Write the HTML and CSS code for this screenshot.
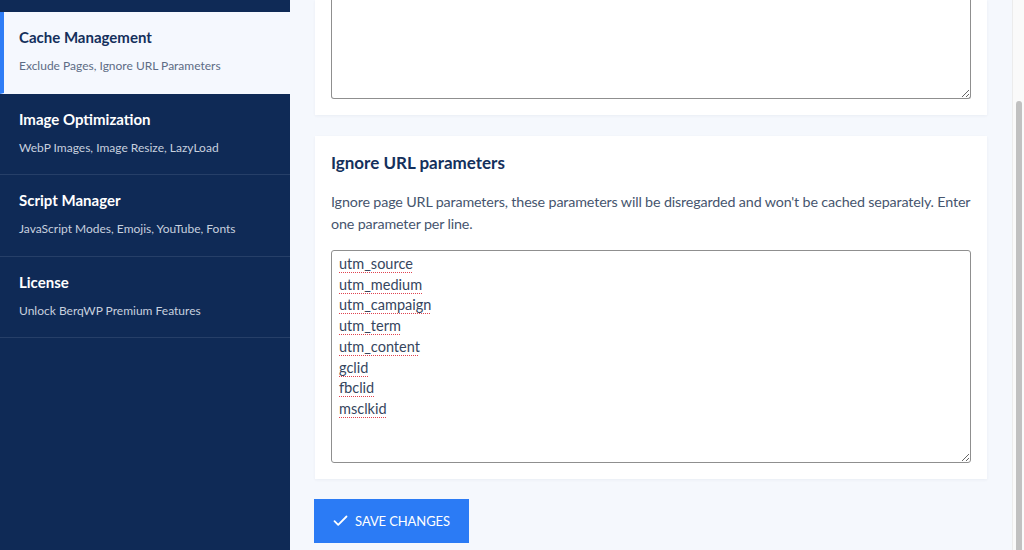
FILE: index.html
```html
<!DOCTYPE html>
<html lang="en">
<head>
  <meta charset="UTF-8">
  <meta name="viewport" content="width=device-width, initial-scale=1.0">
  <title>BerqWP Settings</title>
  <link rel="stylesheet" href="styles.css">
</head>
<body>
  <div class="layout">
    <aside class="sidebar">
      <a class="nav-item active" href="#">
        <span class="nav-title">Cache Management</span>
        <span class="nav-sub">Exclude Pages, Ignore URL Parameters</span>
      </a>
      <a class="nav-item" href="#">
        <span class="nav-title">Image Optimization</span>
        <span class="nav-sub">WebP Images, Image Resize, LazyLoad</span>
      </a>
      <a class="nav-item" href="#">
        <span class="nav-title">Script Manager</span>
        <span class="nav-sub">JavaScript Modes, Emojis, YouTube, Fonts</span>
      </a>
      <a class="nav-item" href="#">
        <span class="nav-title">License</span>
        <span class="nav-sub">Unlock BerqWP Premium Features</span>
      </a>
    </aside>

    <main class="content">
      <!-- bottom of the exclude pages card, scrolled past -->
      <section class="card card-tail">
        <div class="field field-short"></div>
      </section>

      <section class="card">
        <h3>Ignore URL parameters</h3>
        <p>Ignore page URL parameters, these parameters will be disregarded and won't be cached separately. Enter one parameter per line.</p>
        <div class="field field-tall">
          <span class="word">utm_source</span>
          <span class="word">utm_medium</span>
          <span class="word">utm_campaign</span>
          <span class="word">utm_term</span>
          <span class="word">utm_content</span>
          <span class="word">gclid</span>
          <span class="word">fbclid</span>
          <span class="word">msclkid</span>
        </div>
      </section>

      <button class="save-btn" type="button">
        <svg width="15" height="12" viewBox="0 0 15 12" aria-hidden="true">
          <polyline points="1.5,6.2 5.2,9.8 13.5,1.5" fill="none" stroke="#fff" stroke-width="1.8" stroke-linecap="round" stroke-linejoin="round"/>
        </svg>
        Save Changes
      </button>
    </main>

    <div class="scrollbar">
      <div class="scroll-thumb"></div>
    </div>
  </div>
</body>
</html>
```

FILE: styles.css
```css
body {
  margin: 0;
  padding: 0;
  font-family: Lato, "Noto Sans", sans-serif;
  background: #f5f8fd;
  color: #46556e;
  overflow: hidden;
}

.layout {
  display: flex;
  height: 100vh;
}

/* sidebar */
.sidebar {
  width: 290px;
  flex-shrink: 0;
  background: #0f2a56;
  padding-top: 12px;
  box-sizing: border-box;
  display: flex;
  flex-direction: column;
}

.nav-item {
  display: flex;
  flex-direction: column;
  height: 81.5px;
  box-sizing: border-box;
  padding: 15px 0 0 19px;
  border-bottom: 1px solid #263f68;
  text-decoration: none;
}

.nav-title {
  color: #fff;
  font-size: 15px;
  font-weight: bold;
  line-height: 20px;
}

.nav-sub {
  margin-top: 10px;
  color: #c7d0df;
  font-size: 12px;
  line-height: 18px;
}

.nav-item.active {
  background: #f5f8fe;
  border-left: 4px solid #2f7df6;
  padding-left: 15px;
  border-bottom-color: #f5f8fe;
}

.nav-item.active .nav-title {
  color: #14305c;
}

.nav-item.active .nav-sub {
  color: #5d6c85;
}

/* main */
.content {
  flex: 1;
  padding: 0 25px 0 25px;
  display: flex;
  flex-direction: column;
}

.card {
  background: #fff;
  padding: 15px 16px 16px;
  box-shadow: 0 1px 3px rgba(20, 40, 80, 0.05);
  margin-bottom: 21px;
}

.card-tail {
  padding-top: 0;
}

.card h3 {
  margin: 0 0 16px;
  font-size: 17px;
  line-height: 24px;
  color: #14305c;
}

.card p {
  margin: 0 0 15px;
  font-size: 14.3px;
  letter-spacing: -0.15px;
  line-height: 22px;
  color: #46556e;
}

.field {
  border: 1px solid #8f8f8f;
  border-radius: 3px;
  background: #fff;
  padding: 3px 7px;
  box-sizing: border-box;
  overflow: auto;
  resize: vertical;
  display: flex;
  flex-direction: column;
  align-items: flex-start;
}

.field-short {
  height: 99px;
  border-top: none;
  border-radius: 0 0 3px 3px;
}

.field-tall {
  height: 213px;
}

.word {
  font-size: 14.5px;
  line-height: 20.7px;
  color: #36465e;
  text-decoration: underline dotted #e0434f;
  text-underline-offset: 3px;
  text-decoration-thickness: 1px;
}

.save-btn {
  align-self: flex-start;
  margin-top: -1px;
  margin-left: -1px;
  height: 44px;
  width: 155px;
  background: #2b7bf5;
  color: #fff;
  border: none;
  font-family: inherit;
  font-size: 13px;
  letter-spacing: -0.1px;
  text-transform: uppercase;
  display: flex;
  align-items: center;
  justify-content: center;
  gap: 7px;
  cursor: pointer;
}

/* page scrollbar, scrolled to the bottom */
.scrollbar {
  width: 11px;
  flex-shrink: 0;
  background: #fafafa;
  border-left: 1px solid #ececec;
  display: flex;
  flex-direction: column;
  padding-top: 101px;
}

.scroll-thumb {
  flex: 1;
  margin: 0 2px 0 3px;
  background: #c1c1c1;
  border-radius: 4px 4px 0 0;
}
```
